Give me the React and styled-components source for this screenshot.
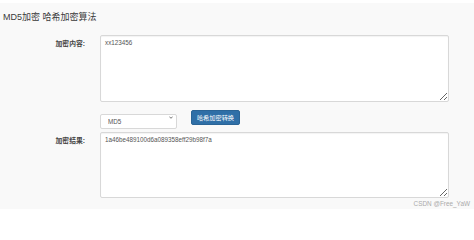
import React from "react"
import styled, {createGlobalStyle} from "styled-components"

const GlobalStyle = createGlobalStyle`
  html, body {
    margin: 0;
    padding: 0;
    background: #fff;
  }
  body {
    font-family: "Liberation Sans", "Noto Sans CJK SC", sans-serif;
  }
`

const Page = styled.div`
  margin-top: 3px;
  height: 206px;
  box-sizing: border-box;
  padding: 9px 0 0 3px;
  background: #f9f9f9;
`

const Title = styled.h4`
  margin: 0;
  font-size: 9px;
  line-height: 11px;
  font-weight: normal;
  color: #3a3a3a;
`

const Row = styled.div`
  display: grid;
  grid-template-columns: 82px 349px;
  column-gap: 15px;
  margin-top: ${(p) => p.$gap}px;
`

const Label = styled.label`
  text-align: right;
  font-size: 6.8px;
  line-height: 8px;
  font-weight: bold;
  color: #444;
  padding-top: 5px;
`

const TextArea = styled.textarea`
  box-sizing: border-box;
  width: 100%;
  height: ${(p) => p.$height}px;
  margin: 0;
  padding: 3px 4px;
  border: 1px solid #d8d8d8;
  border-radius: 2px;
  background: #fff;
  box-shadow: inset 0 1px 1px rgba(0, 0, 0, 0.05);
  font-family: "Liberation Sans", "Noto Sans CJK SC", sans-serif;
  font-size: 6.3px;
  line-height: 8px;
  color: #555;
  resize: vertical;
  outline: none;
`

const Controls = styled.div`
  display: flex;
  align-items: center;
  gap: 14px;
`

const SelectWrap = styled.div`
  position: relative;
  width: 77px;
  height: 15px;
`

const Select = styled.select`
  appearance: none;
  box-sizing: border-box;
  width: 100%;
  height: 100%;
  margin: 0;
  padding: 0 0 0 7px;
  border: 1px solid #d8d8d8;
  border-radius: 2px;
  background: #fff;
  font-family: "Liberation Sans", sans-serif;
  font-size: 6.3px;
  color: #555;
  outline: none;
`

const Chevron = styled.svg`
  position: absolute;
  right: 4px;
  top: 6px;
  width: 4px;
  height: 3px;
  pointer-events: none;
`

const Button = styled.button`
  box-sizing: border-box;
  width: 49px;
  height: 15px;
  margin: 0;
  padding: 0;
  border: 1px solid #2a6496;
  border-radius: 2px;
  background: #2f6fa7;
  color: #fff;
  font-family: "Liberation Sans", "Noto Sans CJK SC", sans-serif;
  font-size: 6.2px;
  cursor: pointer;
`

const Watermark = styled.div`
  text-align: right;
  padding-right: 4px;
  margin-top: 2px;
  font-size: 6.4px;
  line-height: 8px;
  color: #aaa;
`

const App = () => (
  <>
    <GlobalStyle />
    <Page>
      <Title>MD5加密 哈希加密算法</Title>

      <Row $gap={12}>
        <Label>加密内容:</Label>
        <TextArea $height={67} defaultValue="xx123456" />
      </Row>

      <Row $gap={8}>
        <div />
        <Controls>
          <SelectWrap>
            <Select defaultValue="MD5">
              <option>MD5</option>
              <option>SHA1</option>
              <option>SHA256</option>
            </Select>
            <Chevron viewBox="0 0 4 3">
              <path d="M0.4 0.6 L2 2.3 L3.6 0.6" fill="none" stroke="#555" strokeWidth="0.8" />
            </Chevron>
          </SelectWrap>
          <Button>哈希加密转换</Button>
        </Controls>
      </Row>

      <Row $gap={7}>
        <Label>加密结果:</Label>
        <TextArea $height={66} defaultValue="1a46be489100d6a089358eff29b98f7a" />
      </Row>

      <Watermark>CSDN @Free_YaW</Watermark>
    </Page>
  </>
)

export default App
